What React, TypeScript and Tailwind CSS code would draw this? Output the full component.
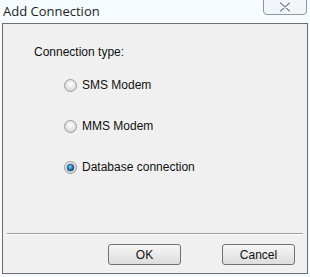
import React from "react";

function Radio({ checked }: { checked?: boolean }) {
  return (
    <svg width="13" height="13" viewBox="0 0 13 13" className="shrink-0">
      <defs>
        <radialGradient id={checked ? "gc" : "gu"} cx="50%" cy="40%" r="60%">
          <stop offset="0%" stopColor="#ffffff" />
          <stop offset="100%" stopColor="#d4d4d4" />
        </radialGradient>
        <radialGradient id="dot" cx="45%" cy="40%" r="60%">
          <stop offset="0%" stopColor="#7fd3f5" />
          <stop offset="60%" stopColor="#1f7fb8" />
          <stop offset="100%" stopColor="#0d3f66" />
        </radialGradient>
      </defs>
      <circle cx="6.5" cy="6.5" r="6" fill={`url(#${checked ? "gc" : "gu"})`} stroke="#9a9a9a" strokeWidth="1" />
      {checked && <circle cx="6.5" cy="6.5" r="3.5" fill="url(#dot)" stroke="#2a4a66" strokeWidth="0.6" />}
    </svg>
  );
}

export default function App() {
  const font = { fontFamily: '"Liberation Sans", Arial, sans-serif' };
  return (
    <div className="w-[310px] h-[277px] bg-[#f5fbfe] flex flex-col overflow-hidden" style={font}>
      <div className="h-[23px] relative shrink-0">
        <span className="absolute left-[3px] top-[2px] text-[13px] text-[#1e1e1e]" style={{ fontFamily: '"Open Sans", "Noto Sans", sans-serif' }}>
          Add Connection
        </span>
        <div className="absolute left-[263px] top-[-2px] w-[44px] h-[17px] border border-[#8c98a4] rounded-b-[4px] bg-[#f2f6f9] flex items-center justify-center">
          <svg width="12" height="10" viewBox="0 0 12 10">
            <path d="M1.5 1 L10.5 9 M10.5 1 L1.5 9" stroke="#ffffff" strokeWidth="3" strokeLinecap="round" />
            <path d="M1.5 1 L10.5 9 M10.5 1 L1.5 9" stroke="#7c8590" strokeWidth="1.3" strokeLinecap="round" />
          </svg>
        </div>
      </div>
      <div className="ml-[2px] w-[306px] h-[251px] border border-[#6e6e6e] bg-[#f0f0f0] flex flex-col shrink-0">
        <div className="flex-1 flex flex-col pl-[31px] pt-[20px] text-[12px] text-[#111111]">
          <div className="h-[16px] leading-[16px]">Connection type:</div>
          <div className="pl-[30px] flex flex-col gap-[25px] mt-[17px]">
            <div className="flex items-center gap-[5px] h-[16px]">
              <Radio />
              <span>SMS Modem</span>
            </div>
            <div className="flex items-center gap-[5px] h-[16px]">
              <Radio />
              <span>MMS Modem</span>
            </div>
            <div className="flex items-center gap-[5px] h-[16px]">
              <Radio checked />
              <span>Database connection</span>
            </div>
          </div>
        </div>
        <div className="mx-[4px] h-[1px] bg-[#a0a0a0] border-b border-white box-content" />
        <div className="h-[38px] flex items-start pt-[9px] text-[12px] text-[#111111]">
          <button className="ml-[105px] w-[73px] h-[21px] border border-[#707070] rounded-[3px] bg-gradient-to-b from-[#f6f6f6] to-[#dddddd] flex items-center justify-center">
            OK
          </button>
          <button className="ml-[41px] w-[73px] h-[21px] border border-[#707070] rounded-[3px] bg-gradient-to-b from-[#f6f6f6] to-[#dddddd] flex items-center justify-center">
            Cancel
          </button>
        </div>
      </div>
    </div>
  );
}
